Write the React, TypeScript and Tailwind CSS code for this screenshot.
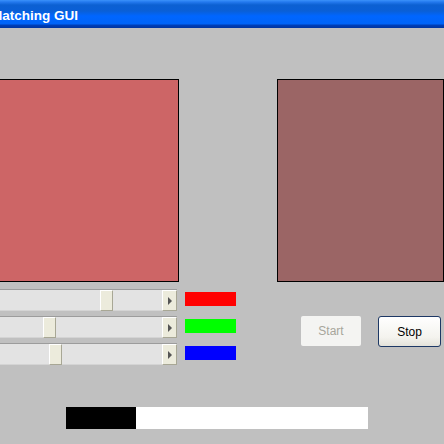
import React from 'react';

const sliders = [
  { thumb: 100, swatch: 'bg-[#ff0000]' },
  { thumb: 43, swatch: 'bg-[#00ff00]' },
  { thumb: 49, swatch: 'bg-[#0000ff]' },
];

function Slider({ thumb }: { thumb: number }) {
  return (
    <div className="relative h-[22px] w-[179px] -ml-[2px] bg-[#e3e3e3] border-t border-t-[#9c9c9c] border-b border-b-[#d4d4d4]">
      {/* thumb sits over the track */}
      <div
        className="absolute top-0 h-[21px] w-[13px] bg-[#ecebdc] border border-t-white border-l-white border-r-[#a8a795] border-b-[#a8a795]"
        style={{ left: thumb + 2 }}
      />
      <div className="absolute right-0 top-0 h-[21px] w-[15px] flex items-center justify-center bg-[#ecebdc] border border-t-white border-l-white border-r-[#a8a795] border-b-[#a8a795]">
        <div className="w-0 h-0 border-y-[4px] border-y-transparent border-l-[4px] border-l-[#555]" />
      </div>
    </div>
  );
}

export default function App() {
  return (
    <div className="w-[444px] h-[444px] overflow-hidden bg-[#c0c0c0] flex flex-col font-['Liberation_Sans',Arial,sans-serif]">
      <div className="h-[28px] shrink-0 overflow-hidden flex items-center pt-[3px] bg-[linear-gradient(to_bottom,#3b92fa_0px,#2379ee_2px,#0c60d2_5px,#0a5fd6_11px,#0066ff_16px,#0064f8_24px,#003fb8_25px,#0034a0_28px)]">
        <span className="-ml-[9px] text-white font-bold text-[13.5px] leading-none whitespace-nowrap">
          Matching GUI
        </span>
      </div>

      <div className="mt-[51px] flex">
        <div className="-ml-[2px] w-[181px] h-[203px] bg-[#cd6566] border border-black" />
        <div className="ml-[98px] w-[167px] h-[203px] bg-[#9b6565] border border-black" />
      </div>

      <div className="mt-[7px] flex">
        <div className="flex flex-col gap-[5px]">
          {sliders.map((s, i) => (
            <Slider key={i} thumb={s.thumb} />
          ))}
        </div>
        <div className="ml-[8px] flex flex-col gap-[13px] pt-[3px]">
          {sliders.map((s, i) => (
            <div key={i} className={`w-[51px] h-[14px] ${s.swatch}`} />
          ))}
        </div>
        <div className="ml-[65px] pt-[27px] flex items-start">
          <button
            disabled
            className="w-[60px] h-[30px] rounded-[2px] bg-[#f4f4f2] text-[#a7a69b] text-[12px]"
          >
            Start
          </button>
          <button className="ml-[17px] w-[63px] h-[31px] rounded-[3px] border border-[#1d3865] bg-[linear-gradient(to_bottom,#ffffff,#f4f3ee_70%,#e3e2da)] text-black text-[12px]">
            Stop
          </button>
        </div>
      </div>

      <div className="mt-[42px] ml-[66px] w-[302px] h-[22px] flex bg-white">
        <div className="w-[70px] h-full bg-black" />
      </div>
    </div>
  );
}
